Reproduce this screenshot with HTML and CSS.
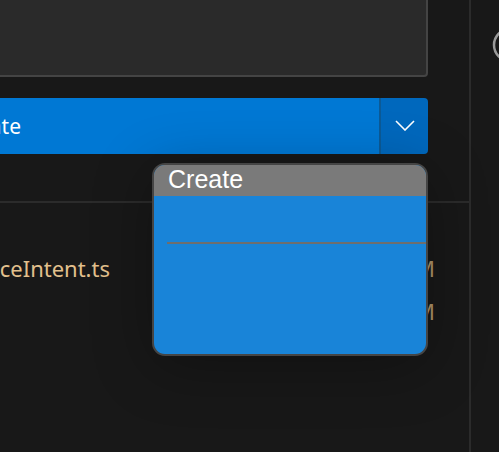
FILE: index.html
```html
<!DOCTYPE html>
<html lang="en">
<head>
<meta charset="utf-8">
<title>Source Control</title>
<link rel="stylesheet" href="styles.css">
</head>
<body>
<div class="main">
  <div class="panel">
    <div class="input-box"></div>
    <div class="split-button">
      <div class="btn-main">
        <div class="btn-label"><span>Create</span></div>
      </div>
      <div class="btn-sep"></div>
      <div class="btn-drop">
        <svg class="chevron" width="20" height="11" viewBox="0 0 20 11"><path d="M1 1 L10 10 L19 1" fill="none" stroke="#ffffff" stroke-width="1.6"/></svg>
      </div>
    </div>
  </div>
  <div class="list">
    <div class="row">
      <div class="name"><span>ceIntent.ts</span></div>
      <div class="status">M</div>
    </div>
    <div class="row">
      <div class="name"></div>
      <div class="status">M</div>
    </div>
  </div>
</div>
<div class="side">
  <svg class="side-icon" width="36" height="36" viewBox="0 0 36 36"><circle cx="18" cy="18" r="16" fill="none" stroke="#9a9a9a" stroke-width="2.5"/></svg>
</div>

<div class="popup">
  <div class="popup-header">Create</div>
  <div class="popup-body">
    <div class="popup-sep"></div>
  </div>
</div>
</body>
</html>
```

FILE: styles.css
```css
html, body {
  margin: 0;
  padding: 0;
}
body {
  width: 499px;
  height: 452px;
  background: #181818;
  overflow: hidden;
  display: flex;
  font-family: "Noto Sans", "Open Sans", sans-serif;
  position: relative;
}
.main {
  width: 469px;
  height: 452px;
  border-right: 2px solid #2b2b2b;
  flex: none;
  display: flex;
  flex-direction: column;
}
.panel {
  padding-right: 41px;
  margin-left: -60px;
}
.input-box {
  height: 81px;
  margin-top: -4px;
  box-sizing: border-box;
  background: #2a2a2a;
  border: 2px solid #444444;
  border-radius: 4px;
}
.split-button {
  margin-top: 21px;
  height: 56px;
  display: flex;
  border-radius: 4px;
  overflow: hidden;
}
.btn-main {
  flex: 1;
  background: #0078d4;
  display: flex;
  align-items: center;
}
.btn-label {
  width: 81px;
  display: flex;
  justify-content: flex-end;
  color: #ffffff;
  font-size: 21px;
  white-space: nowrap;
}
.btn-sep {
  width: 2px;
  background: #0c5a96;
}
.btn-drop {
  width: 47px;
  background: #0068bd;
  display: flex;
  align-items: center;
  justify-content: center;
}
.chevron {
  margin-top: -1px;
}
.list {
  margin-top: 47px;
  border-top: 2px solid #2b2b2b;
  padding-top: 43px;
}
.row {
  height: 43px;
  display: flex;
  align-items: center;
  justify-content: space-between;
  padding-right: 34px;
}
.name {
  width: 110px;
  display: flex;
  justify-content: flex-end;
  white-space: nowrap;
  color: #e2c08d;
  font-size: 22px;
}
.status {
  color: #b0946a;
  font-size: 22px;
}
.side {
  flex: 1;
  padding-top: 27px;
  padding-left: 21px;
}
.side-icon {
  display: block;
}
.popup {
  position: absolute;
  left: 152px;
  top: 163px;
  width: 276px;
  height: 193px;
  box-sizing: border-box;
  border: 2px solid #454545;
  border-radius: 13px;
  overflow: hidden;
  background: #1984d8;
  box-shadow: 0 10px 60px rgba(0, 0, 0, 0.3);
  display: flex;
  flex-direction: column;
}
.popup-header {
  height: 31px;
  background: #7a7a7a;
  color: #ffffff;
  font-family: "Liberation Sans", Arial, sans-serif;
  font-size: 25px;
  line-height: 28px;
  padding-left: 14px;
}
.popup-body {
  flex: 1;
  padding-top: 46px;
  padding-left: 13px;
}
.popup-sep {
  height: 2px;
  background: #6e6e6e;
}
```
